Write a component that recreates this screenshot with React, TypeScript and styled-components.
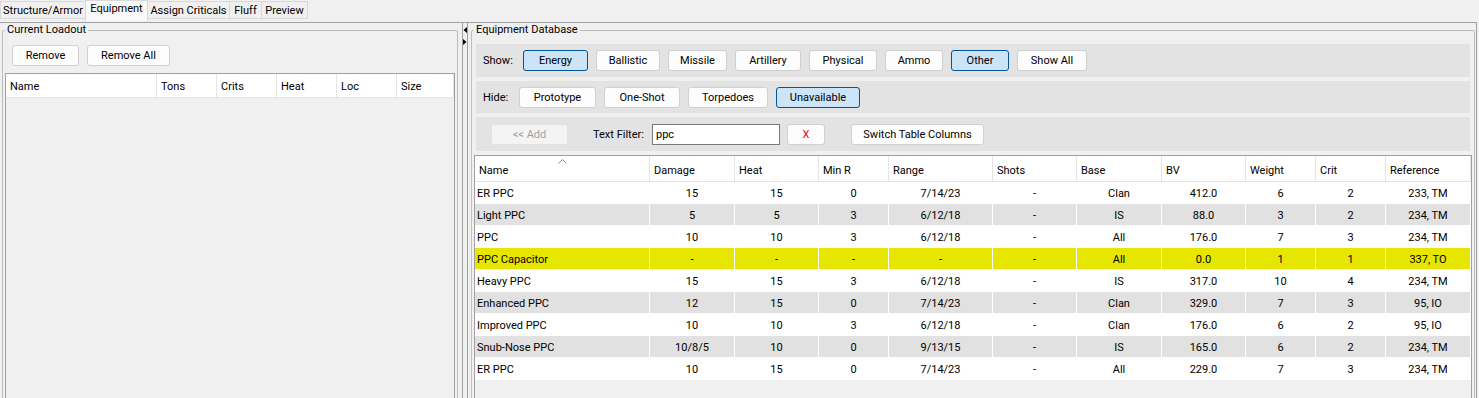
import React from "react";
import styled, { createGlobalStyle } from "styled-components";

const GlobalStyle = createGlobalStyle`
  html, body { margin: 0; padding: 0; background: #f0f0f0; }
  body {
    font-family: Roboto, "Liberation Sans", Arial, sans-serif;
    font-size: 11px;
    color: #000;
  }
  * { box-sizing: border-box; }
`;

const Frame = styled.div`
  width: 1479px;
  height: 398px;
  overflow: hidden;
  background: #f0f0f0;
  display: flex;
  flex-direction: column;
`;

const TabBar = styled.div`
  width: 1477px;
  height: 23px;
  flex: none;
  display: flex;
  align-items: flex-start;
  border-bottom: 1px solid #a0a0a0;
`;

const Tab = styled.div<{ $w: number; $active?: boolean }>`
  width: ${(p) => p.$w}px;
  height: ${(p) => (p.$active ? 21 : 18)}px;
  margin-top: ${(p) => (p.$active ? 0 : 1)}px;
  margin-left: -1px;
  border: 1px solid #d9d9d9;
  border-bottom: ${(p) => (p.$active ? "none" : "1px solid #d9d9d9")};
  background: ${(p) => (p.$active ? "#f9f9f9" : "#f0f0f0")};
  display: flex;
  align-items: ${(p) => (p.$active ? "flex-start" : "center")};
  padding-top: ${(p) => (p.$active ? 1 : 0)}px;
  justify-content: center;
  white-space: nowrap;
  &:first-child { margin-left: 0; }
`;

const Content = styled.div`
  width: 1477px;
  height: 420px;
  flex: none;
  display: flex;
  border-right: 1px solid #a0a0a0;
`;

const LeftPane = styled.div`
  width: 463px;
  flex: none;
  display: flex;
  padding: 0 4px 0 2px;
  border-right: 1px solid #a0a0a0;
`;

const Divider = styled.div`
  width: 4px;
  flex: none;
  display: flex;
  flex-direction: column;
  align-items: flex-end;
  padding-top: 4px;
  gap: 6px;
`;

const RightPane = styled.div`
  flex: 1;
  min-width: 0;
  display: flex;
  padding: 0 1px 0 3px;
  border-left: 1px solid #a0a0a0;
`;

const Group = styled.fieldset`
  margin: 0;
  flex: 1;
  min-width: 0;
  border: 1px solid #bdbdbd;
  border-radius: 2px;
  padding: 0 2px;
  display: flex;
  flex-direction: column;
`;

const GroupTitle = styled.legend`
  padding: 0 2px;
  line-height: 14px;
  font-size: 11px;
`;

const ButtonRow = styled.div`
  display: flex;
  align-items: center;
  gap: 8px;
  height: 21px;
  margin-top: 8px;
  padding-left: 7px;
  flex: none;
`;

const Strip = styled.div<{ $h: number; $top: number; $gap?: number; $pad: number }>`
  height: ${(p) => p.$h}px;
  margin: ${(p) => p.$top}px 2px 0 2px;
  padding-left: ${(p) => p.$pad}px;
  background: #e3e3e3;
  display: flex;
  align-items: center;
  gap: ${(p) => p.$gap ?? 0}px;
  flex: none;
`;

const Label = styled.span<{ $w: number; $ml?: number }>`
  width: ${(p) => p.$w}px;
  margin-left: ${(p) => p.$ml ?? 0}px;
  flex: none;
  white-space: nowrap;
`;

const Btn = styled.button<{ $w: number; $on?: boolean; $off?: boolean; $red?: boolean; $ml?: number }>`
  width: ${(p) => p.$w}px;
  height: 21px;
  flex: none;
  margin: 0 0 0 ${(p) => p.$ml ?? 0}px;
  padding: 0;
  font: inherit;
  white-space: nowrap;
  border: 1px solid ${(p) => (p.$on ? "#005499" : p.$off ? "#e2e2e2" : "#d0d0d0")};
  border-radius: 3px;
  background: ${(p) => (p.$on ? "#cce4f7" : p.$off ? "#f4f4f4" : "#fdfdfd")};
  color: ${(p) => (p.$off ? "#a3a3a3" : p.$red ? "#e01010" : "#000")};
`;

const FilterInput = styled.input`
  width: 128px;
  height: 21px;
  flex: none;
  border: 1px solid #7a7a7a;
  background: #fff;
  font: inherit;
  padding: 0 3px;
  outline: none;
`;

const Table = styled.div<{ $top: number }>`
  margin-top: ${(p) => p.$top}px;
  flex: 1;
  display: flex;
  flex-direction: column;
  border: 1px solid #a0a0a0;
  border-bottom: none;
  background: #f0f0f0;
`;

const HeadRow = styled.div<{ $cols: string; $h: number }>`
  display: grid;
  grid-template-columns: ${(p) => p.$cols};
  height: ${(p) => p.$h}px;
  flex: none;
  background: #fff;
  border-bottom: 1px solid #e5e5e5;
`;

const HeadCell = styled.div<{ $pt: number }>`
  position: relative;
  display: flex;
  align-items: center;
  padding: ${(p) => p.$pt}px 0 0 4px;
  border-right: 1px solid #e5e5e5;
  white-space: nowrap;
`;

const SortMark = styled.svg`
  position: absolute;
  top: 3px;
  left: 50%;
  margin-left: -4px;
`;

const BodyRow = styled.div<{ $cols: string; $bg: string }>`
  display: grid;
  grid-template-columns: ${(p) => p.$cols};
  height: 22px;
  flex: none;
  background: ${(p) => p.$bg};
`;

const Cell = styled.div<{ $left?: boolean }>`
  display: flex;
  align-items: center;
  justify-content: ${(p) => (p.$left ? "flex-start" : "center")};
  padding: 2px 0 0 ${(p) => (p.$left ? 2 : 0)}px;
  border-right: 1px solid #fff;
  border-bottom: 1px solid #fff;
  white-space: nowrap;
  overflow: hidden;
`;

const DB_COLS = "175px 85px 84px 70px 104px 84px 85px 84px 70px 70px 85px";
const LO_COLS = "151px 60px 60px 60px 60px 57px";

const tabs = [
  { t: "Structure/Armor", w: 86 },
  { t: "Equipment", w: 63, a: true },
  { t: "Assign Criticals", w: 83 },
  { t: "Fluff", w: 33 },
  { t: "Preview", w: 47 },
];

const showBtns = [
  { t: "Energy", w: 65, on: true },
  { t: "Ballistic", w: 64 },
  { t: "Missile", w: 59 },
  { t: "Artillery", w: 66 },
  { t: "Physical", w: 68 },
  { t: "Ammo", w: 58 },
  { t: "Other", w: 58, on: true },
  { t: "Show All", w: 70 },
];

const hideBtns = [
  { t: "Prototype", w: 77 },
  { t: "One-Shot", w: 76 },
  { t: "Torpedoes", w: 80 },
  { t: "Unavailable", w: 84, on: true },
];

const dbHead = ["Name", "Damage", "Heat", "Min R", "Range", "Shots", "Base", "BV", "Weight", "Crit", "Reference"];
const loHead = ["Name", "Tons", "Crits", "Heat", "Loc", "Size"];

const rows: string[][] = [
  ["ER PPC", "15", "15", "0", "7/14/23", "-", "Clan", "412.0", "6", "2", "233, TM"],
  ["Light PPC", "5", "5", "3", "6/12/18", "-", "IS", "88.0", "3", "2", "234, TM"],
  ["PPC", "10", "10", "3", "6/12/18", "-", "All", "176.0", "7", "3", "234, TM"],
  ["PPC Capacitor", "-", "-", "-", "-", "-", "All", "0.0", "1", "1", "337, TO"],
  ["Heavy PPC", "15", "15", "3", "6/12/18", "-", "IS", "317.0", "10", "4", "234, TM"],
  ["Enhanced PPC", "12", "15", "0", "7/14/23", "-", "Clan", "329.0", "7", "3", "95, IO"],
  ["Improved PPC", "10", "10", "3", "6/12/18", "-", "Clan", "176.0", "6", "2", "95, IO"],
  ["Snub-Nose PPC", "10/8/5", "10", "0", "9/13/15", "-", "IS", "165.0", "6", "2", "234, TM"],
  ["ER PPC", "10", "15", "0", "7/14/23", "-", "All", "229.0", "7", "3", "234, TM"],
];

const HIGHLIGHT = 3;

function rowColor(i: number) {
  if (i === HIGHLIGHT) return "#e6e600";
  return i % 2 === 1 ? "#e1e1e1" : "#ffffff";
}

export default function App() {
  return (
    <Frame>
      <GlobalStyle />
      <TabBar>
        {tabs.map((t) => (
          <Tab key={t.t} $w={t.w} $active={t.a}>
            {t.t}
          </Tab>
        ))}
      </TabBar>
      <Content>
        <LeftPane>
          <Group>
            <GroupTitle>Current Loadout</GroupTitle>
            <ButtonRow>
              <Btn $w={67}>Remove</Btn>
              <Btn $w={83}>Remove All</Btn>
            </ButtonRow>
            <Table $top={7}>
              <HeadRow $cols={LO_COLS} $h={24}>
                {loHead.map((h) => (
                  <HeadCell key={h} $pt={2}>{h}</HeadCell>
                ))}
              </HeadRow>
            </Table>
          </Group>
        </LeftPane>
        <Divider>
          <svg width="4" height="6" viewBox="0 0 4 6">
            <path d="M4 0 L0.5 3 L4 6 Z" fill="#000" />
          </svg>
          <svg width="4" height="6" viewBox="0 0 4 6">
            <path d="M0 0 L3.5 3 L0 6 Z" fill="#000" />
          </svg>
        </Divider>
        <RightPane>
          <Group>
            <GroupTitle>Equipment Database</GroupTitle>
            <Strip $h={33} $top={7} $gap={8} $pad={7}>
              <Label $w={32}>Show:</Label>
              {showBtns.map((b) => (
                <Btn key={b.t} $w={b.w} $on={b.on}>
                  {b.t}
                </Btn>
              ))}
            </Strip>
            <Strip $h={32} $top={4} $gap={8} $pad={7}>
              <Label $w={28}>Hide:</Label>
              {hideBtns.map((b) => (
                <Btn key={b.t} $w={b.w} $on={b.on}>
                  {b.t}
                </Btn>
              ))}
            </Strip>
            <Strip $h={34} $top={4} $pad={15}>
              <Btn $w={77} $off disabled>
                {"<< Add"}
              </Btn>
              <Label $w={59} $ml={25}>Text Filter:</Label>
              <FilterInput defaultValue="ppc" />
              <Btn $w={38} $ml={7} $red>
                X
              </Btn>
              <Btn $w={133} $ml={26}>Switch Table Columns</Btn>
            </Strip>
            <Table $top={4}>
              <HeadRow $cols={DB_COLS} $h={26}>
                {dbHead.map((h, i) => (
                  <HeadCell key={h} $pt={4}>
                    {i === 0 && (
                      <SortMark width="9" height="5" viewBox="0 0 9 5">
                        <polyline points="0.5,4.5 4.5,0.5 8.5,4.5" fill="none" stroke="#8a8a8a" strokeWidth="1" />
                      </SortMark>
                    )}
                    {h}
                  </HeadCell>
                ))}
              </HeadRow>
              {rows.map((r, i) => (
                <BodyRow key={i} $cols={DB_COLS} $bg={rowColor(i)}>
                  {r.map((c, j) => (
                    <Cell key={j} $left={j === 0}>
                      {c}
                    </Cell>
                  ))}
                </BodyRow>
              ))}
            </Table>
          </Group>
        </RightPane>
      </Content>
    </Frame>
  );
}
